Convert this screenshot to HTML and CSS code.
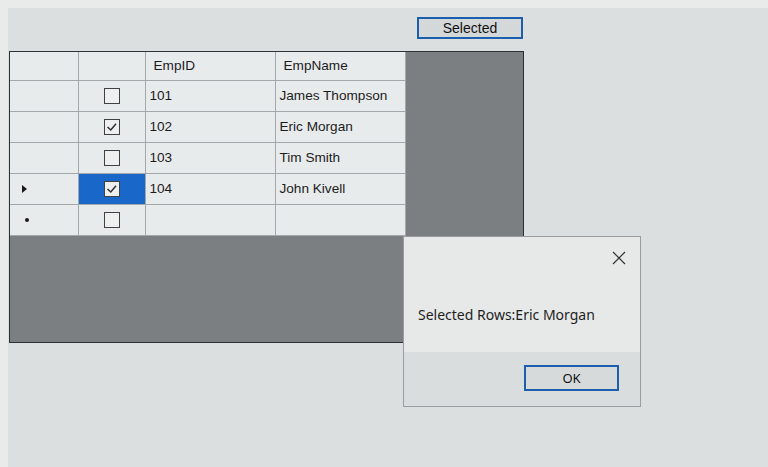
FILE: index.html
```html
<!DOCTYPE html>
<html lang="en">
<head>
  <meta charset="UTF-8" />
  <title>Form1</title>
  <link rel="stylesheet" href="styles.css">
</head>
<body>

  <div class="form">
    <div class="top-bar">
      <button type="button" class="btn-selected">Selected</button>
    </div>

    <div class="grid-view">
      <table class="grid">
        <thead>
          <tr>
            <th class="row-head"></th>
            <th class="col-check"></th>
            <th class="col-id">EmpID</th>
            <th class="col-name">EmpName</th>
          </tr>
        </thead>
        <tbody>
          <tr>
            <td class="row-head"></td>
            <td class="col-check"><span class="check"></span></td>
            <td>101</td>
            <td>James Thompson</td>
          </tr>
          <tr>
            <td class="row-head"></td>
            <td class="col-check"><span class="check checked"><svg viewBox="0 0 14 14"><path d="M2.5 7 L5.8 10 L11 3.8" /></svg></span></td>
            <td>102</td>
            <td>Eric Morgan</td>
          </tr>
          <tr>
            <td class="row-head"></td>
            <td class="col-check"><span class="check"></span></td>
            <td>103</td>
            <td>Tim Smith</td>
          </tr>
          <tr>
            <td class="row-head"><span class="arrow"></span></td>
            <td class="col-check current"><span class="check checked"><svg viewBox="0 0 14 14"><path d="M2.5 7 L5.8 10 L11 3.8" /></svg></span></td>
            <td>104</td>
            <td>John Kivell</td>
          </tr>
          <tr>
            <td class="row-head"><span class="dot"></span></td>
            <td class="col-check"><span class="check"></span></td>
            <td></td>
            <td></td>
          </tr>
        </tbody>
      </table>
    </div>
  </div>

  <div class="msgbox">
    <div class="msg-body">
      <div class="msg-close">
        <svg viewBox="0 0 14 14"><path d="M1 1 L13 13 M13 1 L1 13" /></svg>
      </div>
      <p class="msg-text">Selected Rows:Eric Morgan</p>
    </div>
    <div class="msg-foot">
      <button type="button" class="btn-ok">OK</button>
    </div>
  </div>

</body>
</html>
```

FILE: styles.css
```css
* {
  margin: 0;
  padding: 0;
  box-sizing: border-box;
}

body {
  background-color: #e9ebeb;
  font-family: 'Liberation Sans', Arial, sans-serif;
  color: #1c1c1c;
  height: 467px;
  overflow: hidden;
}

.form {
  margin: 8px 0 0 8px;
  padding: 9px 0 0 1px;
  height: 459px;
  background-color: #dcdfe0;
}

.top-bar {
  width: 515px;
  display: flex;
  justify-content: flex-end;
  padding-right: 1px;
  margin-bottom: 12px;
}

.btn-selected {
  width: 106px;
  height: 22px;
  border: 2px solid #1b5fae;
  background-color: #d5d8d9;
  font-family: 'Liberation Sans', Arial, sans-serif;
  font-size: 14px;
  color: #111;
}

.grid-view {
  width: 515px;
  height: 292px;
  border: 1px solid #2e3133;
  background-color: #7b7f82;
}

.grid {
  border-collapse: collapse;
  font-size: 13.6px;
}

.grid th,
.grid td {
  background-color: #e8ebec;
  border: 1px solid #a4a8aa;
  height: 31px;
  padding: 0 4px;
  text-align: left;
  font-weight: normal;
  vertical-align: middle;
}

.grid tr:first-child td,
.grid th {
  border-top: none;
}

.grid .row-head {
  border-left: none;
}

.grid th {
  height: 28px;
  padding-left: 8px;
}

.row-head {
  width: 68px;
}

.col-check {
  width: 67px;
  text-align: center !important;
}

.col-id {
  width: 130px;
}

.col-name {
  width: 130px;
}

.grid td.current {
  background-color: #1867c9;
}

.check {
  display: inline-block;
  width: 16px;
  height: 16px;
  border: 1px solid #3f4245;
  background-color: #eef0f0;
  vertical-align: middle;
}

.check svg {
  display: block;
  width: 14px;
  height: 14px;
  fill: none;
  stroke: #2e3033;
  stroke-width: 1.5;
}

.arrow {
  display: block;
  margin-left: 8px;
  width: 0;
  height: 0;
  border-top: 4px solid transparent;
  border-bottom: 4px solid transparent;
  border-left: 5px solid #1a1a1a;
}

.dot {
  display: block;
  margin-left: 11px;
  width: 4px;
  height: 4px;
  border-radius: 50%;
  background-color: #1a1a1a;
}

.msgbox {
  position: absolute;
  left: 403px;
  top: 236px;
  width: 238px;
  height: 171px;
  border: 1px solid #9a9d9f;
  background-color: #e7e9e9;
  font-family: 'Noto Sans', 'Open Sans', sans-serif;
}

.msg-body {
  height: 115px;
  position: relative;
}

.msg-close {
  position: absolute;
  right: 14px;
  top: 14px;
  width: 14px;
  height: 14px;
}

.msg-close svg {
  display: block;
  width: 14px;
  height: 14px;
  fill: none;
  stroke: #333;
  stroke-width: 1.2;
}

.msg-text {
  padding: 68px 0 0 14px;
  font-size: 14px;
  color: #1e1e1e;
}

.msg-foot {
  height: 54px;
  background-color: #dadddd;
  display: flex;
  justify-content: flex-end;
  padding: 13px 21px 0 0;
}

.btn-ok {
  width: 95px;
  height: 26px;
  border: 2px solid #1b5fae;
  background-color: #d7dadb;
  font-family: 'Noto Sans', 'Open Sans', sans-serif;
  font-size: 13px;
  color: #111;
}
```
